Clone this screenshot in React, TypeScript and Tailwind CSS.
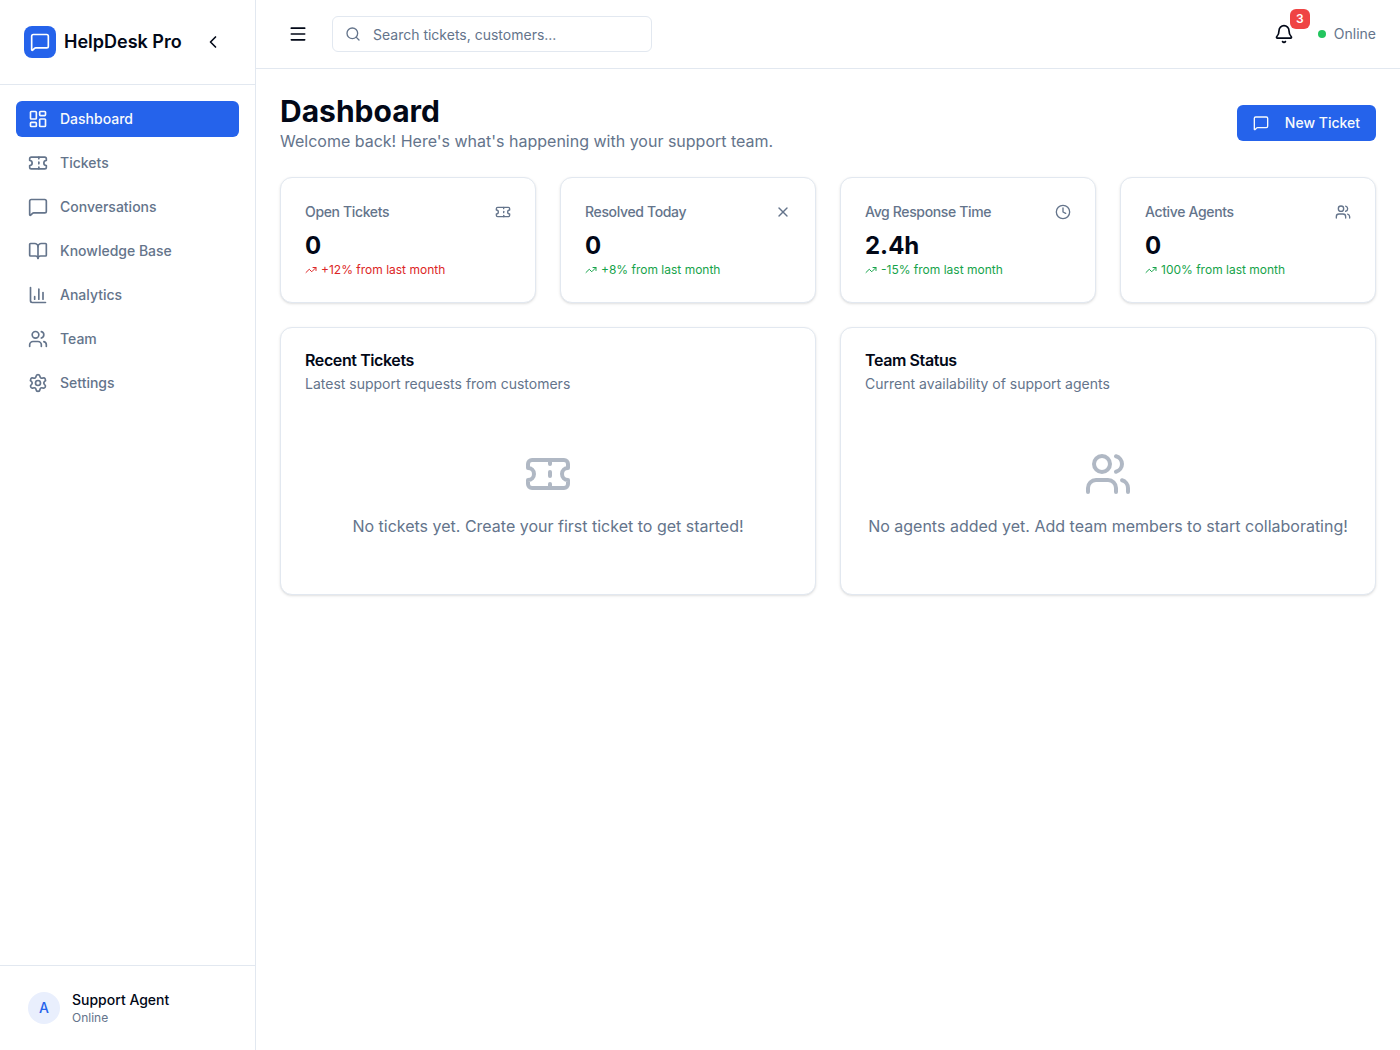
import {
  Bell,
  BookOpen,
  ChartColumn,
  ChevronLeft,
  Clock,
  LayoutDashboard,
  Menu,
  MessageSquare,
  Search,
  Settings,
  Ticket,
  TrendingUp,
  Users,
  X,
} from "lucide-react";

const navItems = [
  { label: "Dashboard", icon: LayoutDashboard, active: true },
  { label: "Tickets", icon: Ticket },
  { label: "Conversations", icon: MessageSquare },
  { label: "Knowledge Base", icon: BookOpen },
  { label: "Analytics", icon: ChartColumn },
  { label: "Team", icon: Users },
  { label: "Settings", icon: Settings },
];

const stats = [
  { title: "Open Tickets", value: "0", change: "+12% from last month", icon: Ticket, bad: true },
  { title: "Resolved Today", value: "0", change: "+8% from last month", icon: X },
  { title: "Avg Response Time", value: "2.4h", change: "-15% from last month", icon: Clock },
  { title: "Active Agents", value: "0", change: "100% from last month", icon: Users },
];

const App = () => {
  return (
    <div className="flex h-[1050px] w-[1400px] overflow-hidden bg-white font-['Inter',sans-serif] text-[#020817] antialiased [font-feature-settings:'rlig'_1,'calt'_1]">
      {/* Sidebar */}
      <aside className="flex w-[256px] shrink-0 flex-col border-r border-[#e2e8f0] bg-white">
        <div className="flex h-[85px] items-center justify-between border-b border-[#e2e8f0] px-6">
          <div className="flex items-center gap-2">
            <div className="flex h-8 w-8 items-center justify-center rounded-lg bg-[#2563eb]">
              <MessageSquare className="h-5 w-5 text-white" />
            </div>
            <span className="text-lg font-semibold">HelpDesk Pro</span>
          </div>
          <ChevronLeft className="mr-2 h-5 w-5" />
        </div>

        <nav className="flex flex-1 flex-col gap-2 p-4">
          {navItems.map((item) => (
            <div
              key={item.label}
              className={
                item.active
                  ? "flex h-9 items-center gap-3 rounded-md bg-[#2563eb] px-3 text-sm font-medium text-[#f8fafc]"
                  : "flex h-9 items-center gap-3 rounded-md px-3 text-sm font-medium text-[#64748b]"
              }
            >
              <item.icon className="h-5 w-5" />
              {item.label}
            </div>
          ))}
        </nav>

        <div className="flex h-[85px] items-center gap-3 border-t border-[#e2e8f0] px-7">
          <div className="flex h-8 w-8 items-center justify-center rounded-full bg-[#e9effd] text-sm font-medium text-[#2563eb]">
            A
          </div>
          <div>
            <div className="text-sm leading-5 font-medium">Support Agent</div>
            <div className="text-xs leading-4 text-[#64748b]">Online</div>
          </div>
        </div>
      </aside>

      <div className="flex min-w-0 flex-1 flex-col">
        {/* Header */}
        <header className="flex h-[69px] items-center justify-between border-b border-[#e2e8f0] px-6">
          <div className="flex items-center">
            <Menu className="ml-2 h-5 w-5" />
            <div className="ml-6 flex h-9 w-80 items-center gap-2 rounded-md border border-[#e2e8f0] px-3">
              <Search className="h-4 w-4 text-[#64748b]" />
              <span className="mt-[2px] ml-1 text-sm text-[#64748b]">Search tickets, customers...</span>
            </div>
          </div>
          <div className="flex items-center gap-6">
            <div className="relative">
              <Bell className="h-5 w-5" />
              <span className="absolute -top-[15px] -right-[16px] flex h-5 w-5 items-center justify-center rounded-md bg-[#ef4444] text-xs font-semibold text-white">
                3
              </span>
            </div>
            <div className="flex items-center gap-2">
              <span className="h-2 w-2 rounded-full bg-[#22c55e]" />
              <span className="text-sm text-[#64748b]">Online</span>
            </div>
          </div>
        </header>

        {/* Main */}
        <main className="flex-1 p-6">
          <div className="flex items-center justify-between">
            <div>
              <h1 className="text-3xl leading-9 font-bold">Dashboard</h1>
              <p className="text-base text-[#64748b]">Welcome back! Here's what's happening with your support team.</p>
            </div>
            <button className="flex h-9 items-center gap-4 rounded-md bg-[#2563eb] px-4 text-sm font-medium text-[#f8fafc]">
              <MessageSquare className="h-4 w-4" />
              New Ticket
            </button>
          </div>

          <div className="mt-6 grid grid-cols-4 gap-6">
            {stats.map((stat) => (
              <div key={stat.title} className="h-[126px] rounded-xl border border-[#e2e8f0] bg-white p-6 shadow-sm">
                <div className="flex items-center justify-between">
                  <span className="text-sm font-medium tracking-tight text-[#64748b]">{stat.title}</span>
                  <stat.icon className="h-4 w-4 text-[#64748b]" />
                </div>
                <div className="mt-2 text-2xl leading-8 font-bold">{stat.value}</div>
                <div className={stat.bad ? "flex items-center gap-1 text-xs text-[#dc2626]" : "flex items-center gap-1 text-xs text-[#16a34a]"}>
                  <TrendingUp className="h-3 w-3" />
                  {stat.change}
                </div>
              </div>
            ))}
          </div>

          <div className="mt-6 grid grid-cols-2 gap-6">
            <div className="h-[268px] rounded-xl border border-[#e2e8f0] bg-white p-6 shadow-sm">
              <h3 className="leading-4 font-semibold tracking-tight">Recent Tickets</h3>
              <p className="mt-1.5 text-sm text-[#64748b]">Latest support requests from customers</p>
              <div className="mt-14 flex flex-col items-center text-center">
                <Ticket className="h-12 w-12 text-[#64748b] opacity-50" />
                <p className="mt-4 text-[#64748b]">No tickets yet. Create your first ticket to get started!</p>
              </div>
            </div>
            <div className="h-[268px] rounded-xl border border-[#e2e8f0] bg-white p-6 shadow-sm">
              <h3 className="leading-4 font-semibold tracking-tight">Team Status</h3>
              <p className="mt-1.5 text-sm text-[#64748b]">Current availability of support agents</p>
              <div className="mt-14 flex flex-col items-center text-center">
                <Users className="h-12 w-12 text-[#64748b] opacity-50" />
                <p className="mt-4 text-[#64748b]">No agents added yet. Add team members to start collaborating!</p>
              </div>
            </div>
          </div>
        </main>
      </div>
    </div>
  );
};

export default App;
